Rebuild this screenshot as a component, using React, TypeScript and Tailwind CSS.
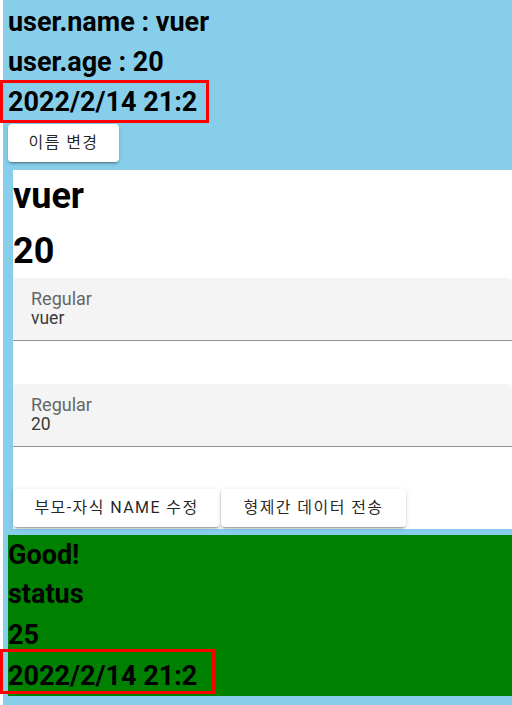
import React from "react";

const FONT = { fontFamily: "Roboto, 'Noto Sans CJK KR', sans-serif" };

function VBtn({ label, w }: { label: string; w: string }) {
  return (
    <button
      className={`${w} h-[38px] shrink-0 rounded-[4px] bg-white text-[16px] tracking-[0.089em] text-[rgba(0,0,0,0.87)] shadow-[0_3px_1px_-2px_rgba(0,0,0,0.2),0_2px_2px_0_rgba(0,0,0,0.14),0_1px_5px_0_rgba(0,0,0,0.12)] flex items-center justify-center whitespace-nowrap`}
    >
      {label}
    </button>
  );
}

function Field({ value }: { value: string }) {
  return (
    <div className="rounded-t-[4px] bg-[#f4f4f4] border-b border-[#929292] pl-[18px] pt-[11px] pb-[12px]">
      <div className="text-[18px] leading-[19px] text-[#666666]">Regular</div>
      <div className="text-[17.5px] leading-[20px] text-[#3a3a3a]">{value}</div>
    </div>
  );
}

export default function App() {
  return (
    <div className="w-[512px] h-[705px] overflow-hidden bg-white flex" style={FONT}>
      <div className="ml-[3px] flex-1 bg-[#87ceeb] pt-[7px] flex flex-col">
        <div className="pl-[5px] h-[40px] text-[27px] font-bold leading-[30px] text-black whitespace-nowrap">
          user.name : vuer
        </div>
        <div className="pl-[5px] h-[33px] text-[27px] font-bold leading-[30px] text-black whitespace-nowrap">
          user.age : 20
        </div>
        <div className="-ml-[3px] w-[209px] border-[3px] border-[#ff0000] pl-[5px] pt-[4px] pb-[3px] text-[27px] font-bold leading-[30px] text-black whitespace-nowrap">
          2022/2/14 21:2
        </div>
        <div className="mt-[1px] pl-[5px]">
          <VBtn label="이름 변경" w="w-[111px]" />
        </div>
        <div className="mt-[8px] ml-[10px] bg-white pt-[5px] pb-[2px]">
          <div className="h-[55px] text-[36px] font-bold leading-[42px] text-black">vuer</div>
          <div className="h-[42px] mb-[6px] text-[36px] font-bold leading-[42px] text-black">20</div>
          <Field value="vuer" />
          <div className="h-[43px]" />
          <Field value="20" />
          <div className="h-[42px]" />
          <div className="flex gap-[1px]">
            <VBtn label="부모-자식 NAME 수정" w="w-[207px]" />
            <VBtn label="형제간 데이터 전송" w="w-[185px]" />
          </div>
        </div>
        <div className="mt-[6px] ml-[5px] bg-[#008000] pt-[5px] pb-[2px] text-[27px] font-bold leading-[30px] text-black">
          <div className="h-[39px]">Good!</div>
          <div className="h-[41px]">status</div>
          <div className="h-[29px]">25</div>
          <div className="-ml-[8px] w-[215px] border-[3px] border-[#ff0000] pl-[5px] pt-[9px] whitespace-nowrap">
            2022/2/14 21:2
          </div>
        </div>
      </div>
    </div>
  );
}
